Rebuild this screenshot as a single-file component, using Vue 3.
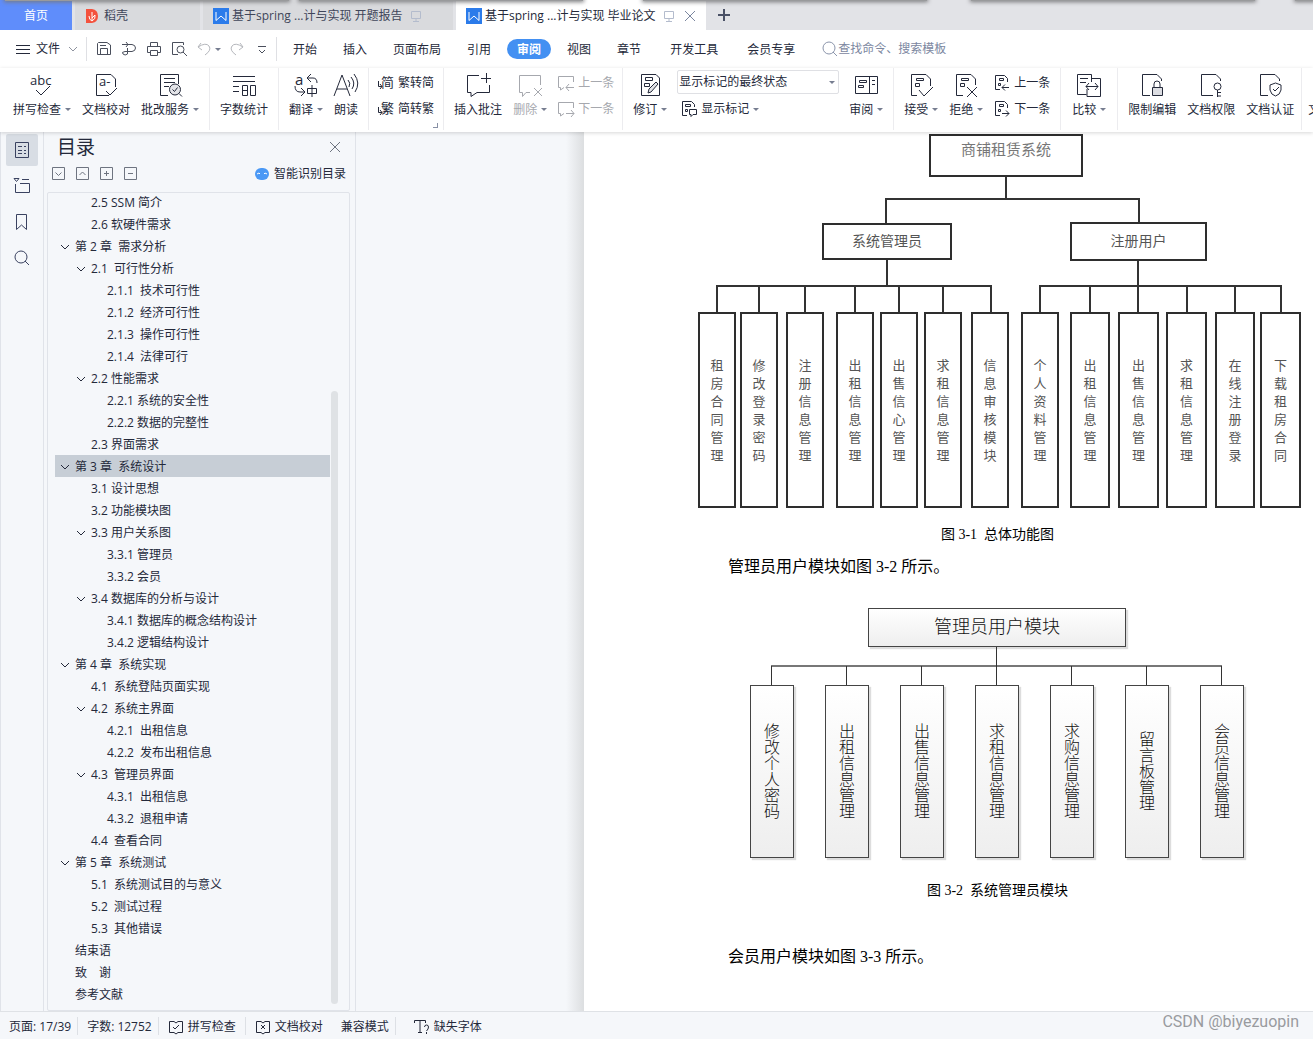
<script setup>
const quick = ['save', 'export', 'print', 'preview']
const menus = [
  { t: '开始' }, { t: '插入' }, { t: '页面布局' }, { t: '引用' }, { t: '审阅', active: true },
  { t: '视图' }, { t: '章节' }, { t: '开发工具', spaced: true }, { t: '会员专享', spaced: true }
]
const ribbon = [
  [{ t: '拼写检查', i: 'spell', drop: true }, { t: '文档校对', i: 'proof' }, { t: '批改服务', i: 'correct', drop: true }],
  [{ t: '字数统计', i: 'count' }],
  [{ t: '翻译', i: 'translate', drop: true }, { t: '朗读', i: 'read' }],
  [{ stack: [{ t: '繁转简', i: 'jian' }, { t: '简转繁', i: 'fan' }], launcher: true }],
  [{ t: '插入批注', i: 'comment' }, { t: '删除', i: 'delcomment', drop: true, off: true },
    { stack: [{ t: '上一条', i: 'cprev', off: true }, { t: '下一条', i: 'cnext', off: true }] }],
  [{ t: '修订', i: 'revise', drop: true }, { select: true }, { t: '审阅', i: 'pane', drop: true }],
  [{ t: '接受', i: 'accept', drop: true }, { t: '拒绝', i: 'reject', drop: true },
    { stack: [{ t: '上一条', i: 'rprev' }, { t: '下一条', i: 'rnext' }] }],
  [{ t: '比较', i: 'compare', drop: true }],
  [{ t: '限制编辑', i: 'lock' }, { t: '文档权限', i: 'key' }, { t: '文档认证', i: 'shield' }],
  [{ t: '文档定稿', i: 'final' }]
]
const toc = [
  [2, '2.5 SSM 简介'], [2, '2.6 软硬件需求'], [1, '第 2 章  需求分析', 1], [2, '2.1  可行性分析', 1],
  [3, '2.1.1  技术可行性'], [3, '2.1.2  经济可行性'], [3, '2.1.3  操作可行性'], [3, '2.1.4  法律可行'],
  [2, '2.2 性能需求', 1], [3, '2.2.1 系统的安全性'], [3, '2.2.2 数据的完整性'], [2, '2.3 界面需求'],
  [1, '第 3 章  系统设计', 1, 1], [2, '3.1 设计思想'], [2, '3.2 功能模块图'], [2, '3.3 用户关系图', 1],
  [3, '3.3.1 管理员'], [3, '3.3.2 会员'], [2, '3.4 数据库的分析与设计', 1], [3, '3.4.1 数据库的概念结构设计'],
  [3, '3.4.2 逻辑结构设计'], [1, '第 4 章  系统实现', 1], [2, '4.1  系统登陆页面实现'], [2, '4.2  系统主界面', 1],
  [3, '4.2.1  出租信息'], [3, '4.2.2  发布出租信息'], [2, '4.3  管理员界面', 1], [3, '4.3.1  出租信息'],
  [3, '4.3.2  退租申请'], [2, '4.4  查看合同'], [1, '第 5 章  系统测试', 1], [2, '5.1  系统测试目的与意义'],
  [2, '5.2  测试过程'], [2, '5.3  其他错误'], [1, '结束语'], [1, '致　谢'], [1, '参考文献']
].map(([level, text, open, current]) => ({ level, text, open, current }))

const box = (n) => ({ left: n.x + 'px', top: n.y + 'px', width: n.w + 'px', height: n.h + 'px' })
const overview = [
  { t: '商铺租赁系统', x: 235, y: 1, w: 154, h: 43, c: 'root' },
  { t: '系统管理员', x: 128, y: 90, w: 130, h: 37 },
  { t: '注册用户', x: 376, y: 89, w: 137, h: 39 },
  ...[[4, 38, '租房合同管理'], [46, 38, '修改登录密码'], [92, 38, '注册信息管理'], [142, 38, '出租信息管理'],
    [186, 38, '出售信心管理'], [230, 38, '求租信息管理'], [277, 38, '信息审核模块'], [327, 38, '个人资料管理'],
    [376, 40, '出租信息管理'], [424, 41, '出售信息管理'], [472, 41, '求租信息管理'], [521, 40, '在线注册登录'],
    [566, 41, '下载租房合同']].map(([x, w, t]) => ({ t, x, w, y: 179, h: 196, c: 'leaf' }))
]
const overviewLines = 'M312 44V66M192 90V66H445V89M193 127V153M444 128V179' +
  'M23 179V153H297V179M65 153V179M111 153V179M161 153V179M205 153V179M249 153V179' +
  'M346 179V153H587V179M396 153V179M493 153V179M541 153V179'
const admin = [
  { t: '管理员用户模块', x: 174, y: 25, w: 258, h: 39 },
  ...['修改个人密码', '出租信息管理', '出售信息管理', '求租信息管理', '求购信息管理', '留言板管理', '会员信息管理']
    .map((t, i) => ({ t, x: 56 + 75 * i, y: 102, w: 44, h: 173, c: 'leaf' }))
]
const drops = [0, 1, 2, 3, 4, 5, 6].map((i) => `M${77.5 + 75 * i} 83V102`).join('')
</script>

<template>
  <div class="app">
    <svg class="sprite" aria-hidden="true">
      <symbol id="i-spell" viewBox="0 0 24 24"><text x="0" y="12" font-size="13">abc</text><path d="M6 17l5 5 9-9" /></symbol>
      <symbol id="i-proof" viewBox="0 0 24 24"><path d="M15 22.500H2.500V1.500H17L21.500 6V14M12 18l4 4 7-7" /><text x="5" y="13" font-size="13">a-</text></symbol>
      <symbol id="i-correct" viewBox="0 0 24 24"><path d="M10 22.500H2.500V1.500H20.500V11M6 5.500H17M6 9.500H17M6 13.500H11" /><circle cx="17" cy="16.500" r="5.500" fill="#e3e4e8" /><path d="M14.500 16.500l2 2 3-4M21 20.500l3 3" /></symbol>
      <symbol id="i-count" viewBox="0 0 24 24"><path d="M1 3.500H23M1 8.500H23M1 13.500H7M1 18.500H7M10.500 12.500H15.500V22.500H10.500ZM10.500 17.500H15.500M18.500 12.500H23.500V22.500H18.500Z" /></symbol>
      <symbol id="i-translate" viewBox="0 0 24 24"><text x="1" y="12" font-size="15">a</text><path d="M17 1l-4 4 4 4M13 5h6q4 0 4 5M1 13q0 6 5 6h4M7 15l4 4-4 4M13.500 15.500H22.500V20.500H13.500ZM18 12V24" /></symbol>
      <symbol id="i-read" viewBox="0 0 24 24"><path d="M0 23L8 2 16 23M3 16H13M14 7q3 3 1 7M17 4q5 6 1 12M20 1q7 9 1 18" /></symbol>
      <symbol id="i-comment" viewBox="0 0 24 24"><path d="M13 2.500H1.500V19.500H5V23.500L11 19.500H23.500V12M20.500 0V10M15 5.500H25" /></symbol>
      <symbol id="i-delcomment" viewBox="0 0 24 24"><path d="M12 19.500H8L4.500 23.500V19.500H1.500V2.500H22.500V12M16 15l8 8M24 15l-8 8" /></symbol>
      <symbol id="i-revise" viewBox="0 0 24 24"><path d="M3.500 1.500H18L21.500 5V22.500H3.500ZM7.500 4.500H14.500V7.500H7.500ZM6.500 10.500H11.500V13.500H6.500Z" /><path d="M10 20l1-4 7-7 2 2-7 8z" fill="#e3e4e8" /></symbol>
      <symbol id="i-pane" viewBox="0 0 24 24"><path d="M1.500 3.500H23.500V20.500H1.500ZM15.500 3.500V20.500M5.500 7.500H12.500V9.500H5.500ZM4.500 12.500H9.500V14.500H4.500ZM18 7.500H21M18 11.500H21" /></symbol>
      <symbol id="i-accept" viewBox="0 0 24 24"><path d="M8 22.500H2.500V1.500H17L21.500 6V13M7.500 5.500H14.500V7.500H7.500ZM6.500 10.500H10.500V13.500H6.500ZM10 17l5 6 9-9" /></symbol>
      <symbol id="i-reject" viewBox="0 0 24 24"><path d="M9 22.500H2.500V1.500H17L21.500 6V12M7.500 5.500H14.500V7.500H7.500ZM6.500 10.500H10.500V13.500H6.500ZM13 14l10 10M23 14L13 24" /></symbol>
      <symbol id="i-compare" viewBox="0 0 24 24"><path d="M14.500 9V1.500H.500V21.500H9.500M10 16V23.500H23.500V5.500H15M3 5.500H11M3 9.500H9M9 13.500H21M12 10l-3 3.500 3 3.500M18 10l3 3.500-3 3.500" /></symbol>
      <symbol id="i-lock" viewBox="0 0 24 24"><path d="M10 22.500H2.500V1.500H17L21.500 6V8M14 14V11q0-3 3-3t3 3V14" /><path d="M12.500 14.500H22.500V22.500H12.500Z" fill="#dcdde2" /></symbol>
      <symbol id="i-key" viewBox="0 0 24 24"><path d="M14 22.500H2.500V1.500H17L21.500 6V8M18.500 17V24M18.500 19.500H22M18.500 23H22" /><circle cx="18.500" cy="13.500" r="3.500" /></symbol>
      <symbol id="i-shield" viewBox="0 0 24 24"><path d="M10 22.500H2.500V1.500H17L21.500 6V8M17.500 10l5.500 2v5q-1 5-5.500 6-4.500-1-5.500-6v-5zM15 16l2 2 4-4" /></symbol>
      <symbol id="i-final" viewBox="0 0 24 24"><path d="M4.500 2.500H20.500V22.500H4.500Z" /></symbol>
      <symbol id="i-jian" viewBox="0 0 16 16"><text x="3" y="12" font-size="13">简</text><path d="M.500 6V11.500H4M2 9l2 2.500-2 2.500" /></symbol>
      <symbol id="i-fan" viewBox="0 0 16 16"><text x="3" y="12" font-size="13">繁</text><path d="M.500 6V11.500H4M2 9l2 2.500-2 2.500" /></symbol>
      <symbol id="i-cprev" viewBox="0 0 16 16"><path d="M6 12.500L2.500 15V12.500H.500V1.500H15.500V7M16 12.500H8M11 9l-3 3.500 3 3.500" /></symbol>
      <symbol id="i-cnext" viewBox="0 0 16 16"><path d="M6 12.500L2.500 15V12.500H.500V1.500H15.500V7M8 12.500H16M13 9l3 3.500-3 3.500" /></symbol>
      <symbol id="i-rprev" viewBox="0 0 16 16"><path d="M6 14.500H1.500V.500H10.500L13.500 3.500V7M5.500 3.500H9.500V5.500H5.500ZM4.500 8.500H6.500V10.500H4.500ZM15 12.500H8M11 9.500l-3 3 3 3" /></symbol>
      <symbol id="i-rnext" viewBox="0 0 16 16"><path d="M6 14.500H1.500V.500H10.500L13.500 3.500V7M5.500 3.500H9.500V5.500H5.500ZM4.500 8.500H6.500V10.500H4.500ZM8 12.500H15M12 9.500l3 3-3 3" /></symbol>
      <symbol id="i-mark" viewBox="0 0 16 16"><path d="M6 14.500H1.500V.500H10.500L13.500 3.500V6M4.500 3.500H9.500V5.500H4.500ZM4.500 8.500H6.500V10.500H4.500ZM8.500 8.500H15.500V13.500H12L10 15.500V13.500H8.500Z" /></symbol>
      <symbol id="i-save" viewBox="0 0 16 16"><path d="M2.500 1.500H11L14.500 4V13.500H1.500V2.500ZM4.500 13V7.500H11.500V13M4 4.500H10" /></symbol>
      <symbol id="i-export" viewBox="0 0 16 16"><path d="M1 3.500H11Q14.500 4 14.500 7T11 10.500H7M5 1l2 2.500L5 6M6.500 7V13Q4 15 2 13T4 10.500H7" /></symbol>
      <symbol id="i-print" viewBox="0 0 16 16"><path d="M4.500 5V1.500H11.500V5M4 11.500H1.500V5.500H14.500V11.500H12M4.500 9.500H11.500V14.500H4.500Z" /></symbol>
      <symbol id="i-preview" viewBox="0 0 16 16"><path d="M7 13.500H1.500V1.500H12.500V4M12 11l4 4" /><circle cx="9.500" cy="8.500" r="3.500" /></symbol>
      <symbol id="i-undo" viewBox="0 0 16 16"><path d="M5 2L2 6l4 3M2 6q8-5 11-1t-4 9" /></symbol>
      <symbol id="i-redo" viewBox="0 0 16 16"><path d="M11 2l3 4-4 3M14 6q-8-5-11-1t4 9" /></symbol>
      <symbol id="i-more" viewBox="0 0 16 16"><path d="M4 5.500H12M5 9l3 3 3-3" /></symbol>
      <symbol id="i-down" viewBox="0 0 10 10"><path d="M1 3l4 4 4-4" /></symbol>
      <symbol id="i-screen" viewBox="0 0 12 12"><path d="M1.500 1.500H10.500V8.500H1.500ZM6 9V11M3 11.500H9" /></symbol>
      <symbol id="i-close" viewBox="0 0 12 12"><path d="M1 1l10 10M11 1L1 11" /></symbol>
      <symbol id="i-search" viewBox="0 0 16 16"><circle cx="7" cy="7" r="6" /><path d="M11 11l4 4" /></symbol>
      <symbol id="i-outline" viewBox="0 0 16 16"><path d="M1.500.500H14.500V15.500H1.500ZM4 4.500H8M4 8.500H8M4 11.500H8M10 4.500H12M10 8.500H12M10 11.500H12" /></symbol>
      <symbol id="i-folder" viewBox="0 0 16 16"><path d="M1.500 6V14.500H15.500V5.500H6M0 .500H5L2.500 3.500ZM8 1.500H15" /></symbol>
      <symbol id="i-bookmark" viewBox="0 0 16 16"><path d="M2.500.500H12.500V15.500L7.500 11 2.500 15.500Z" /></symbol>
      <symbol id="i-word" viewBox="0 0 16 16"><path d="M0 0H16V16H0Z" fill="#2b7bea" stroke="none" /><path d="M3 4V12.500L8 8 13 12.500V4" stroke="#fff" /></symbol>
    </svg>

    <header class="top">
      <div class="behind" aria-hidden="true"><i></i><i></i><i></i><i></i><i></i></div>
      <nav class="tabs">
        <button class="home">首页</button>
        <button class="tab docer">
          <svg class="s14" viewBox="0 0 14 14"><path d="M1 0H7Q13 1 13 7T7 14H1Z" fill="#f4523e" stroke="none" /><path d="M4 7q0 4 3 5 4-2 3-6M7 3v8M7 9l3-3" stroke="#fff" /></svg>稻壳
        </button>
        <button class="tab"><svg class="s16"><use href="#i-word" /></svg>基于spring ...计与实现 开题报告<svg class="s12 screen"><use href="#i-screen" /></svg></button>
        <button class="tab active"><svg class="s16"><use href="#i-word" /></svg>基于spring ...计与实现 毕业论文<svg class="s12 screen"><use href="#i-screen" /></svg><svg class="s12 x"><use href="#i-close" /></svg></button>
        <button class="add" aria-label="新建"><svg class="s12" viewBox="0 0 12 12"><path d="M6 0V12M0 6H12" stroke-width="2" /></svg></button>
      </nav>
    </header>

    <div class="menubar">
      <button class="file"><svg class="s16" viewBox="0 0 16 16"><path d="M1 4.500H15M1 8.500H15M1 12.500H15" /></svg>文件<svg class="s10"><use href="#i-down" /></svg></button>
      <div class="quick">
        <button v-for="q in quick" :key="q" :aria-label="q"><svg class="s16"><use :href="'#i-' + q" /></svg></button>
        <button class="off undo" aria-label="撤销"><svg class="s16"><use href="#i-undo" /></svg><i class="caret"></i></button>
        <button class="off" aria-label="恢复"><svg class="s16"><use href="#i-redo" /></svg></button>
        <button aria-label="更多"><svg class="s16"><use href="#i-more" /></svg></button>
      </div>
      <nav class="menus">
        <button v-for="m in menus" :key="m.t" :class="{ active: m.active, spaced: m.spaced }">{{ m.t }}</button>
      </nav>
      <label class="find"><svg class="s16"><use href="#i-search" /></svg><input type="text" placeholder="查找命令、搜索模板" aria-label="查找命令" /></label>
    </div>

    <div class="ribbon">
      <div v-for="(g, gi) in ribbon" :key="gi" class="group">
        <template v-for="(b, bi) in g" :key="bi">
          <div v-if="b.stack" class="stack">
            <button v-for="s in b.stack" :key="s.t" class="small" :class="{ off: s.off }"><svg class="s16"><use :href="'#i-' + s.i" /></svg>{{ s.t }}</button>
            <i v-if="b.launcher" class="launcher"></i>
          </div>
          <div v-else-if="b.select" class="stack wide">
            <div class="pick">
              <select aria-label="显示状态"><option>显示标记的最终状态</option></select><i class="caret"></i>
            </div>
            <button class="small marks"><svg class="s16"><use href="#i-mark" /></svg>显示标记<i class="caret"></i></button>
          </div>
          <button v-else class="big" :class="{ off: b.off }">
            <svg class="s24"><use :href="'#i-' + b.i" /></svg>
            <span>{{ b.t }}<i v-if="b.drop" class="caret"></i></span>
          </button>
        </template>
      </div>
    </div>

    <main class="work">
      <nav class="rail">
        <button class="on" aria-label="目录"><svg class="s16"><use href="#i-outline" /></svg></button>
        <button aria-label="章节"><svg class="s16"><use href="#i-folder" /></svg></button>
        <button aria-label="书签"><svg class="s16"><use href="#i-bookmark" /></svg></button>
        <button aria-label="查找"><svg class="s16"><use href="#i-search" /></svg></button>
      </nav>

      <aside class="panel">
        <div class="phead"><h2>目录</h2><button aria-label="关闭"><svg class="s12"><use href="#i-close" /></svg></button></div>
        <div class="ptools">
          <button aria-label="展开"><svg class="s14" viewBox="0 0 14 14"><path d="M.500.500H12.500V12.500H.500ZM3.500 5.500l3 3 3-3" /></svg></button>
          <button aria-label="收起"><svg class="s14" viewBox="0 0 14 14"><path d="M.500.500H12.500V12.500H.500ZM3.500 8l3-3 3 3" /></svg></button>
          <button aria-label="增加"><svg class="s14" viewBox="0 0 14 14"><path d="M.500.500H12.500V12.500H.500ZM4 6.500H9M6.500 4V9" /></svg></button>
          <button aria-label="减少"><svg class="s14" viewBox="0 0 14 14"><path d="M.500.500H12.500V12.500H.500ZM4 6.500H9" /></svg></button>
          <button class="smart"><svg class="s14" viewBox="0 0 14 14"><rect y="1" width="14" height="12" rx="6" fill="#4a98f5" stroke="none" /><path d="M2 7l2-1 1 1M9 7l1-1 2 1" stroke="#fff" /></svg>智能识别目录</button>
        </div>
        <div class="tree">
          <ul>
            <li v-for="(r, i) in toc" :key="i" :class="['l' + r.level, { current: r.current }]">
              <svg class="s10"><use v-if="r.open" href="#i-down" /></svg><a href="#">{{ r.text }}</a>
            </li>
          </ul>
          <div class="track"><i></i></div>
        </div>
      </aside>

      <section class="desk">
        <article class="page">
          <div class="chart overview">
            <svg width="607" height="386"><path :d="overviewLines" /></svg>
            <div v-for="(n, i) in overview" :key="i" class="node" :class="n.c" :style="box(n)"><span>{{ n.t }}</span></div>
          </div>
          <p class="caption">图 3-1&nbsp; 总体功能图</p>
          <p>管理员用户模块如图 3-2 所示。</p>
          <div class="chart admin">
            <svg width="607" height="292"><path d="M77 83H528" class="bus" /><path :d="'M302.500 64V102' + drops" /></svg>
            <div v-for="(n, i) in admin" :key="i" class="node" :class="n.c" :style="box(n)"><span>{{ n.t }}</span></div>
          </div>
          <p class="caption">图 3-2&nbsp; 系统管理员模块</p>
          <p class="later">会员用户模块如图 3-3 所示。</p>
        </article>
      </section>
    </main>

    <footer class="status">
      <span class="cell">页面: 17/39</span>
      <span class="cell">字数: 12752</span>
      <button class="cell"><svg class="s16" viewBox="0 0 16 16"><path d="M1.500 2.500H6L8 4 10 2.500H14.500V13.500H10L8 15 6 13.500H1.500ZM5 8l2 2 4-4" /></svg>拼写检查</button>
      <button class="cell plain"><svg class="s16" viewBox="0 0 16 16"><path d="M1.500 2.500H6L8 4 10 2.500H14.500V13.500H10L8 15 6 13.500H1.500ZM6 6l4 4M10 6l-4 4" /></svg>文档校对</button>
      <span class="cell">兼容模式</span>
      <button class="cell fonts"><svg class="s16" viewBox="0 0 16 16"><path d="M.500 4V1.500H11.500V4M6 2V13.500M4 13.500H8M10.500 8q0-2 2-2t2 2-2 4M12.500 13V15" /></svg>缺失字体</button>
      <span class="mark">CSDN @biyezuopin</span>
    </footer>
  </div>
</template>

<style>
body { margin: 0; }
</style>

<style scoped>
.app { display: flex; flex-direction: column; min-height: 100vh; overflow: hidden; background: #fff; color: #24293a; font: 12px/16px "Open Sans", "Noto Sans CJK SC", sans-serif; }
.app * { box-sizing: border-box; }
button { display: flex; align-items: center; padding: 0; border: 0; background: none; color: inherit; font: inherit; white-space: nowrap; }
svg { flex: none; fill: none; stroke: currentColor; overflow: visible; }
svg text, symbol text { fill: currentColor; stroke: none; }
symbol { overflow: visible; }
.sprite { display: none; }
.s10 { width: 10px; height: 10px; }
.s12 { width: 12px; height: 12px; }
.s14 { width: 14px; height: 14px; }
.s16 { width: 16px; height: 16px; }
.s24 { width: 24px; height: 24px; }
.caret { display: inline-block; flex: none; border: 3px solid transparent; border-top-color: #767d90; border-bottom: 0; margin-left: 4px; vertical-align: 3px; }
.off { color: #a6a8ae; }

.top { position: relative; overflow: hidden; background: #e2e3e7; }
.behind { position: absolute; inset: -2px 0 auto 5px; display: flex; gap: 40px; pointer-events: none; }
.behind i { flex: 0 0 284px; height: 3px; background: #999a9c; box-shadow: 0 0 4px 1px #77787a; }
.behind i:first-child { margin-right: -30px; }
.behind i:nth-child(2) { margin-right: 20px; }
.behind i:nth-child(3) { margin-right: 4px; }
.behind i:last-child { flex: 1 0 20px; }
.tabs { display: flex; gap: 3px; height: 30px; }
.home { width: 72px; justify-content: center; padding-top: 2px; background: #5f8dfb; color: #fff; }
.tab { width: 250px; padding: 2px 10px 0; gap: 3px; background: #d9dadd; color: #40465a; }
.tab .s12 { color: #b4bccd; }
.tab .screen { margin-left: 4px; }
.tab .x { margin-left: 6px; color: #7b869f; }
.docer { width: 125px; gap: 5px; }
.tab.active { background: #fff; color: #24293a; }
.add { margin-left: 9px; color: #4a5166; }

.menubar { display: flex; align-items: center; height: 38px; padding-left: 15px; }
.file { gap: 5px; }
.file .s10 { margin-left: 3px; color: #8e939f; }
.quick { display: flex; align-items: center; gap: 9px; height: 24px; margin-left: 8px; padding: 0 6px 0 9px; border: solid #dfe0e4; border-width: 0 1px; color: #4a4f5c; }
.quick .off { color: #b5b7bc; }
.quick .caret { margin-left: 3px; }
.undo { margin-right: -1px; }
.menus { display: flex; align-items: center; margin-left: 3px; }
.menus button { height: 20px; padding: 2px 13px 0; }
.menus .active { margin: 0 3px; padding: 1px 10px 0; border-radius: 10px; background: #4390f2; color: #fff; font-weight: 700; }
.menus .spaced { margin-left: 3px; }
.find { display: flex; align-items: center; margin-left: 14px; color: #8b95ab; }
.find input { width: 140px; padding: 0; border: 0; outline: 0; background: none; font: inherit; }
.find input::placeholder { color: #7c879f; opacity: 1; }

.ribbon { position: relative; z-index: 1; display: flex; height: 64px; padding-left: 3px; background: #fff; box-shadow: 0 1px 4px rgba(0, 0, 0, .16); }
.group { position: relative; display: flex; flex: none; gap: 11px; height: 62px; padding: 0 10px; border-right: 1px solid #ececef; }
.group:nth-child(4) { padding: 0 9px; }
.group:nth-child(5) { padding-right: 8px; }
.group:nth-child(6) { gap: 10px; }
.group:nth-child(8) { padding: 0 11px; }
.group:nth-child(9) { padding-right: 7px; }
.group:last-child { padding-left: 6px; border: 0; }
.big { flex-direction: column; gap: 5px; padding-top: 5px; }
.stack { display: flex; flex-direction: column; gap: 6px; padding-top: 5px; }
.small { height: 20px; gap: 4px; }
.launcher { position: absolute; right: 5px; bottom: 2px; width: 5px; height: 5px; border: solid #8890a5; border-width: 0 1px 1px 0; }
.wide { width: 162px; padding-top: 2px; gap: 5px; }
.pick { position: relative; display: flex; align-items: center; height: 24px; border: 1px solid #dfe0e4; border-radius: 2px; }
.pick select { width: 100%; height: 100%; padding: 0 1px; border: 0; background: none; color: inherit; font: inherit; appearance: none; }
.pick .caret { position: absolute; right: 3px; }
.marks { padding-left: 4px; }
.marks .caret { margin-left: 0; }

.work { display: flex; flex: 1; background: #f5f7fa; }
.rail { display: flex; flex-direction: column; gap: 4px; width: 44px; padding: 2px 5px; border: solid #e0e3e9; border-width: 0 1px; color: #3a4260; }
.rail button { width: 32px; height: 32px; justify-content: center; border-radius: 2px; }
.rail .on { background: #d8dde4; }
.panel { display: flex; flex-direction: column; flex: none; width: 312px; padding: 0 5px 0 3px; border-right: 1px solid #e0e3e9; }
.phead { display: flex; align-items: center; justify-content: space-between; height: 30px; padding: 0 9px 0 10px; }
.phead h2 { margin: 0; font-size: 19px; font-weight: 400; line-height: 24px; }
.phead button, .ptools button { color: #6e7480; }
.ptools { display: flex; align-items: center; gap: 10px; height: 30px; padding: 0 4px 6px 5px; }
.ptools .smart { margin-left: auto; gap: 5px; color: #24293a; }
.tree { display: flex; flex: 1; padding: 0 11px 4px 7px; border: 1px solid #e0e3e9; border-radius: 2px; }
.tree ul { flex: 1; margin: -2px 0 0; padding: 0; list-style: none; }
.tree li { display: flex; align-items: center; gap: 5px; height: 22px; padding-left: 5px; white-space: pre; }
.tree .l2 { padding-left: 21px; }
.tree .l3 { padding-left: 37px; }
.tree .current { background: #c7ced6; }
.tree a { padding-top: 2px; color: inherit; text-decoration: none; }
.tree .s10 { height: 12px; padding-top: 2px; }
.track { display: flex; width: 8px; padding: 198px 0 2px 1px; }
.track i { width: 7px; border-radius: 4px; background: #dfe2e5; }

.desk { display: flex; flex: 1; min-width: 0; padding-left: 228px; background: linear-gradient(90deg, #f5f7fa 210px, #dcdee0 228px); }
.page { flex: 1; min-width: 0; padding: 1px 12px 0 110px; background: #fff; color: #000; font: 16px/32px "Liberation Serif", "Noto Sans CJK SC", serif; }
.page p { margin: 0; padding-left: 34px; }
.page .caption { padding: 0; font-size: 14px; text-align: center; }
.page .later { margin-top: 34px; }
.chart { position: relative; width: 607px; margin: 0 auto; }
.chart svg { display: block; }
.node { position: absolute; display: flex; align-items: center; justify-content: center; background: #fff; }
.overview { color: #555; font-size: 14px; line-height: 18px; }
.overview svg { color: #333; stroke-width: 2; }
.overview .node { border: 2px solid #2e2e2e; }
.overview .root { padding-bottom: 12px; font-size: 15px; color: #777; }
.overview .leaf { padding-top: 2px; font-size: 13px; }
.overview .leaf span { width: 13px; }
.admin { color: #111; font-size: 18px; font-weight: 300; line-height: 16px; }
.admin svg { position: relative; z-index: 1; color: #333; }
.admin .bus { stroke: #777; stroke-width: 2; }
.admin .node { padding-bottom: 2px; border: 1px solid #444; background: linear-gradient(#fff, #eee); box-shadow: 2px 2px 1px #ddd; }
.admin .leaf { padding: 0; font-size: 16px; }
.admin .leaf span { width: 16px; }
.leaf span { word-break: break-all; }

.status { display: flex; align-items: center; height: 28px; border-top: 1px solid #dfe2e6; background: #f5f7fa; }
.cell { display: flex; align-items: center; gap: 4px; height: 18px; padding: 2px 6px 0 9px; border-right: 1px solid #dde0e5; }
.status button.cell { padding-right: 9px; }
.status button.plain { border: 0; }
.status .fonts { padding-left: 18px; border: 0; }
.mark { margin-left: auto; padding: 0 14px 8px 0; color: #999b9f; font: 16px/20px Roboto, sans-serif; }
</style>
